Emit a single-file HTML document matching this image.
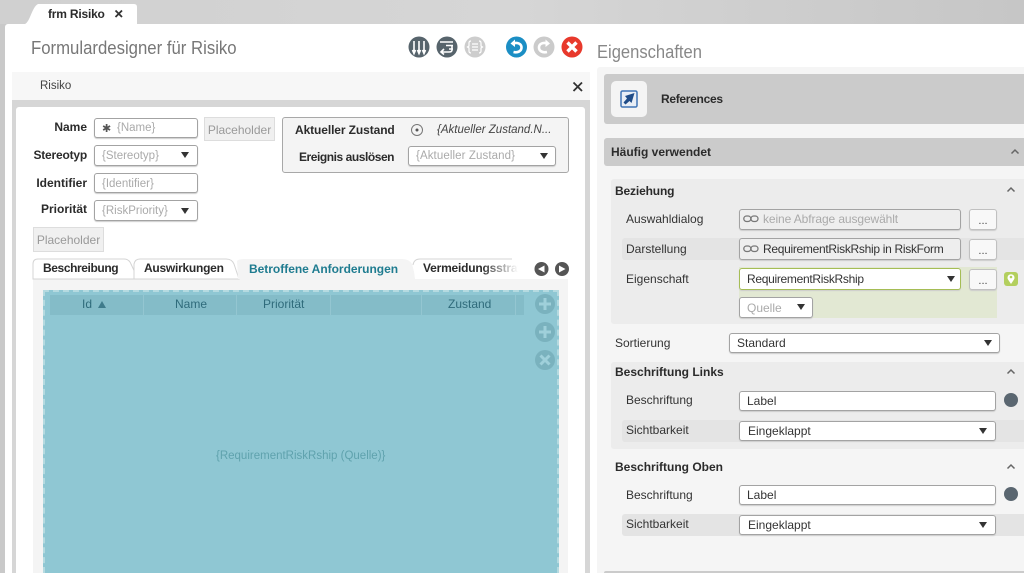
<!DOCTYPE html>
<html lang="de"><head><meta charset="utf-8"><title>Formulardesigner</title>
<style>
html,body{margin:0;padding:0;width:1024px;height:573px;overflow:hidden;background:#c9c9c9}
#r{position:absolute;left:0;top:0;width:1024px;height:573px;overflow:hidden;font-family:"Liberation Sans",sans-serif;font-size:12px;color:#333;filter:blur(.35px)}
#r div,#r svg{position:absolute}
.t{white-space:nowrap;line-height:16px;height:16px}
.b{font-weight:bold;color:#2b2b2b}
.f{box-sizing:border-box;background:#fff;border:1px solid #a3a3a3;border-radius:3px;box-shadow:0 1px 1px #ccc}
.g{color:#aaa}
.a{width:0;height:0;border-left:4px solid transparent;border-right:4px solid transparent;border-top:6px solid #333}
.dots{box-sizing:border-box;background:#f8f8f8;border:1px solid #c0c0c0;border-radius:3px;text-align:center;line-height:22px;font-size:11px;color:#444;box-shadow:0 1px 1px #ccc}
</style></head><body><div id="r">
<div style="left:0;top:0;width:1024px;height:24px;background:linear-gradient(90deg,#d0d0d0,#d6d6d6 50%,#c6c6c6)"></div>
<svg style="left:24px;top:4px" width="114" height="21"><path d="M1 20C6 18 8 3 14 0H110Q113 0 113 3V20Z" fill="#fff"/></svg>
<div class="t b" style="left:48px;top:6px;letter-spacing:-.2px">frm Risiko</div>
<svg style="left:114px;top:9px" width="10" height="10"><path d="M1.500 1.500 8 8M8 1.500 1.500 8" stroke="#333" stroke-width="1.800" fill="none"/></svg>
<div style="left:5px;top:24px;width:1019px;height:549px;background:#fff;border-radius:3px 0 0 0"></div>
<div class="t" style="left:31px;top:37px;height:22px;line-height:22px;font-size:18px;color:#777;transform:scaleX(.93);transform-origin:0 0">Formulardesigner für Risiko</div>

<svg style="left:408px;top:36px" width="175" height="22">
<circle cx="11" cy="11" r="10.500" fill="#57646c"/><path d="M6 5V17M11 5V17M16 5V17M4.500 14 6 17.500 7.500 14M9.500 14 11 17.500 12.500 14M14.500 14 16 17.500 17.500 14" stroke="#fff" stroke-width="1.600" fill="none"/>
<circle cx="39" cy="11" r="10.500" fill="#57646c"/><path d="M32 6H45M38 9.500H45M41 13H45M44 9.500V14Q44 16 41 16H33M36 13 33 16 36 18.500" stroke="#fff" stroke-width="1.600" fill="none"/>
<circle cx="67" cy="11" r="10.500" fill="#cdcdcd"/><path d="M63 5Q61 5 61 7V10L59.500 11 61 12V15Q61 17 63 17M71 5Q73 5 73 7V10L74.500 11 73 12V15Q73 17 71 17M64 8H70M64 11H70M64 14H70" stroke="#fff" stroke-width="1.200" fill="none"/>
<circle cx="108.500" cy="11" r="10.500" fill="#1b8ec4"/><path d="M105 7.500C110 6 113.500 8 113.500 11.500 113.500 15 110 17 105.500 16" stroke="#fff" stroke-width="2.600" fill="none"/><path d="M102.500 7.500 107 3.500V11Z" fill="#fff"/>
<circle cx="136" cy="11" r="10.500" fill="#cbcbcb"/><path d="M139.500 7.500C134.500 6 131 8 131 11.500 131 15 134.500 17 139 16" stroke="#fff" stroke-width="2.600" fill="none"/><path d="M142 7.500 137.500 3.500V11Z" fill="#fff"/>
<circle cx="164" cy="11" r="10.500" fill="#e8392c"/><path d="M159.500 6.500 168.500 15.500M168.500 6.500 159.500 15.500" stroke="#fff" stroke-width="3.400"/>
</svg>

<!-- form panel -->
<div style="left:12px;top:72px;width:578px;height:28px;background:#f7f7f7"></div>
<div class="t" style="left:40px;top:78px;color:#444;font-size:11.500px">Risiko</div>
<svg style="left:572px;top:81px" width="12" height="12"><path d="M1.500 1.500 10 10M10 1.500 1.500 10" stroke="#333" stroke-width="1.800"/></svg>
<div style="left:12px;top:100px;width:578px;height:473px;background:#d6d6d6"></div>
<div style="left:16px;top:107px;width:569px;height:466px;background:#fff;border-radius:3px 3px 0 0"></div>

<div class="t b" style="left:20px;width:67px;text-align:right;top:119px">Name</div>
<div class="f" style="left:94px;top:118px;width:104px;height:20px"></div>
<div class="t" style="left:102px;top:121px;font-size:11px;color:#555">✱</div>
<div class="t g" style="left:117px;top:120px;font-size:11.500px">{Name}</div>
<div class="t b" style="left:20px;width:67px;text-align:right;top:147px;letter-spacing:-.2px">Stereotyp</div>
<div class="f" style="left:94px;top:145px;width:104px;height:21px"></div>
<div class="t g" style="left:102px;top:148px;font-size:11.500px">{Stereotyp}</div>
<div class="a" style="left:181px;top:152px"></div>
<div class="t b" style="left:20px;width:67px;text-align:right;top:175px">Identifier</div>
<div class="f" style="left:94px;top:173px;width:104px;height:20px"></div>
<div class="t g" style="left:102px;top:176px;font-size:11.500px">{Identifier}</div>
<div class="t b" style="left:20px;width:67px;text-align:right;top:201px">Priorität</div>
<div class="f" style="left:94px;top:200px;width:104px;height:21px"></div>
<div class="t g" style="left:102px;top:203px;font-size:11.500px">{RiskPriority}</div>
<div class="a" style="left:181px;top:208px"></div>
<div style="left:204px;top:117px;width:71px;height:24px;box-sizing:border-box;background:#f0f0f0;border:1px solid #ddd;text-align:center;line-height:24px;color:#999;font-size:12px">Placeholder</div>
<div style="left:33px;top:227px;width:71px;height:25px;box-sizing:border-box;background:#f0f0f0;border:1px solid #ddd;text-align:center;line-height:25px;color:#999;font-size:12px">Placeholder</div>

<div style="left:282px;top:117px;width:287px;height:56px;box-sizing:border-box;background:#f4f4f4;border:1px solid #a8a8a8;border-radius:3px"></div>
<div class="t b" style="left:295px;top:122px;letter-spacing:-.1px">Aktueller Zustand</div>
<svg style="left:410px;top:123px" width="14" height="14"><circle cx="7" cy="7" r="5.500" fill="none" stroke="#777"/><circle cx="7" cy="7" r="1.500" fill="#555"/></svg>
<div class="t" style="left:437px;top:122px;font-style:italic;color:#444;font-size:11.500px">{Aktueller Zustand.N...</div>
<div class="t b" style="left:299px;top:149px;letter-spacing:-.45px">Ereignis auslösen</div>
<div class="f" style="left:408px;top:146px;width:148px;height:20px"></div>
<div class="t g" style="left:416px;top:148px;font-size:11.500px;letter-spacing:.1px">{Aktueller Zustand}</div>
<div class="a" style="left:540px;top:153px"></div>

<!-- tabs -->
<div style="left:33px;top:279px;width:535px;height:294px;background:#f4f4f4"></div>
<svg style="left:32px;top:258px" width="512" height="22">
<path d="M1 21V6Q1 1 6 1H92Q97 1 99 6L106 21Z" fill="#fff" stroke="#d4d4d4"/>
<path d="M102 21 102 6Q103 1 108 1H194Q200 1 202 6L207 21Z" fill="#fff" stroke="#d4d4d4"/>
<path d="M206 21 205 3Q207 1 212 1H370Q377 1 380 6L384 21Z" fill="#f4f4f4"/>
<path d="M383 21 381 6Q382 1 388 1H512V21Z" fill="#fff"/><path d="M381 7Q382 1 388 1H480" fill="none" stroke="#d4d4d4"/>
</svg>
<div class="t b" style="left:43px;top:260px;letter-spacing:-.4px">Beschreibung</div>
<div class="t b" style="left:144px;top:260px;letter-spacing:-.25px">Auswirkungen</div>
<div class="t b" style="left:249px;top:261px;color:#1f7c90;letter-spacing:-.02px">Betroffene Anforderungen</div>
<div class="t b" style="left:423px;top:260px;width:97px;overflow:hidden;letter-spacing:-.2px;-webkit-mask-image:linear-gradient(90deg,#000 60%,transparent 98%)">Vermeidungsstrategie</div>
<svg style="left:534px;top:262px" width="36" height="14"><circle cx="7.500" cy="7" r="7" fill="#555"/><path d="M10.500 3.500V10.500L4 7Z" fill="#fff"/><circle cx="28" cy="7" r="7" fill="#555"/><path d="M25 3.500V10.500L31.500 7Z" fill="#fff"/></svg>

<!-- teal -->
<div style="left:43px;top:290px;width:516px;height:283px;background:#8fc7d3"></div>
<div style="left:43px;top:290px;width:516px;height:283px;box-sizing:border-box;border:2px dashed #cfe8ea;border-bottom:0;opacity:.6"></div>
<div style="left:50px;top:295px;width:474px;height:20px;background:#84bcc8"></div>
<div style="left:143px;top:295px;width:1px;height:20px;background:#94c6d1"></div>
<div style="left:236px;top:295px;width:1px;height:20px;background:#94c6d1"></div>
<div style="left:330px;top:295px;width:1px;height:20px;background:#94c6d1"></div>
<div style="left:421px;top:295px;width:1px;height:20px;background:#94c6d1"></div>
<div style="left:515px;top:295px;width:1px;height:20px;background:#94c6d1"></div>
<div class="t" style="left:82px;top:296px;color:#2f6b7b">Id</div>
<svg style="left:97px;top:300px" width="10" height="9"><path d="M5 1 9 8H1Z" fill="#3f7b8b"/></svg>
<div class="t" style="left:175px;top:296px;color:#2f6b7b">Name</div>
<div class="t" style="left:263px;top:296px;color:#2f6b7b">Priorität</div>
<div class="t" style="left:448px;top:296px;color:#2f6b7b">Zustand</div>
<svg style="left:534px;top:293px" width="22" height="78">
<circle cx="11" cy="11" r="10" fill="#7ab2be"/><path d="M11 5V17M5 11H17" stroke="#9fd0da" stroke-width="3"/>
<circle cx="11" cy="39" r="10" fill="#7ab2be"/><path d="M11 33V45M5 39H17" stroke="#9fd0da" stroke-width="3"/>
<circle cx="11" cy="67" r="10" fill="#7ab2be"/><path d="M6.500 62.500 15.500 71.500M15.500 62.500 6.500 71.500" stroke="#9fd0da" stroke-width="3"/>
</svg>
<div class="t" style="left:216px;top:448px;color:#5fa2ad;font-size:11.500px">{RequirementRiskRship (Quelle)}</div>

<!-- properties -->
<div class="t" style="left:597px;top:40px;height:24px;line-height:24px;font-size:18px;color:#888;transform:scaleX(.92);transform-origin:0 0">Eigenschaften</div>
<div style="left:597px;top:67px;width:427px;height:506px;background:#f5f5f5;border-radius:3px 0 0 0"></div>
<div style="left:604px;top:74px;width:420px;height:50px;background:#cbcbcb;border-radius:3px 0 0 3px"></div>
<div style="left:611px;top:81px;width:36px;height:36px;background:#f4f4f4;border-radius:5px"></div>
<svg style="left:620px;top:90px" width="18" height="18"><rect x="1" y="1" width="16" height="16" rx="1.500" fill="#e8eef6" stroke="#3f74b5" stroke-width="1.500"/><path d="M14.500 3 5 6 7 8.500 3.500 12.500 5.500 14.500 9.500 11 11.500 13Z" fill="#1f4c88"/></svg>
<div class="t b" style="left:661px;top:91px;letter-spacing:-.3px">References</div>
<div style="left:604px;top:138px;width:420px;height:28px;background:#cbcbcb;border-radius:3px 0 0 3px"></div>
<div class="t b" style="left:611px;top:144px">Häufig verwendet</div>
<svg style="left:1010px;top:148px" width="10" height="7"><path d="M1.500 5.500 5 2 8.500 5.500" stroke="#666" stroke-width="1.500" fill="none"/></svg>

<div style="left:611px;top:179px;width:413px;height:145px;background:#ececec;border-radius:3px 0 0 3px"></div>
<div class="t b" style="left:615px;top:183px;letter-spacing:-.15px">Beziehung</div>
<svg style="left:1006px;top:186px" width="10" height="7"><path d="M1.500 5.500 5 2 8.500 5.500" stroke="#666" stroke-width="1.500" fill="none"/></svg>

<div class="t" style="left:626px;top:211px">Auswahldialog</div>
<div class="f" style="left:739px;top:209px;width:222px;height:21px;background:#eee"></div>
<svg style="left:743px;top:215px" width="16" height="8"><rect x=".8" y="1" width="7" height="5.500" rx="2.700" fill="none" stroke="#777" stroke-width="1.300"/><rect x="8" y="1" width="7" height="5.500" rx="2.700" fill="none" stroke="#777" stroke-width="1.300"/></svg>
<div class="t g" style="left:763px;top:211px;letter-spacing:-.1px">keine Abfrage ausgewählt</div>
<div class="dots" style="left:969px;top:209px;width:28px;height:21px">...</div>

<div style="left:622px;top:238px;width:402px;height:22px;background:#e4e4e4;border-radius:3px 0 0 3px"></div>
<div class="t" style="left:626px;top:241px">Darstellung</div>
<div class="f" style="left:739px;top:238px;width:222px;height:22px;background:#eee"></div>
<svg style="left:743px;top:245px" width="16" height="8"><rect x=".8" y="1" width="7" height="5.500" rx="2.700" fill="none" stroke="#777" stroke-width="1.300"/><rect x="8" y="1" width="7" height="5.500" rx="2.700" fill="none" stroke="#777" stroke-width="1.300"/></svg>
<div class="t" style="left:763px;top:241px;letter-spacing:-.3px">RequirementRiskRship in RiskForm</div>
<div class="dots" style="left:969px;top:239px;width:28px;height:21px">...</div>

<div style="left:739px;top:267px;width:258px;height:51px;background:#e2e8d3"></div>
<div class="t" style="left:626px;top:271px">Eigenschaft</div>
<div class="f" style="left:739px;top:268px;width:222px;height:22px;border-color:#a5bd55"></div>
<div class="t" style="left:747px;top:271px;letter-spacing:-.3px">RequirementRiskRship</div>
<div class="a" style="left:947px;top:276px"></div>
<div class="dots" style="left:969px;top:269px;width:28px;height:21px">...</div>
<div style="left:1004px;top:272px;width:14px;height:14px;background:#b3cf5e;border-radius:3px"></div>
<svg style="left:1006px;top:273px" width="10" height="12"><path d="M5 11 2 6.500A3.500 3.500 0 1 1 8 6.500Z" fill="#fff"/><circle cx="5" cy="4" r="1.300" fill="#b3cf5e"/></svg>
<div class="f" style="left:739px;top:297px;width:74px;height:21px"></div>
<div class="t g" style="left:747px;top:300px">Quelle</div>
<div class="a" style="left:797px;top:304px"></div>

<div class="t" style="left:615px;top:335px">Sortierung</div>
<div class="f" style="left:729px;top:333px;width:271px;height:20px"></div>
<div class="t" style="left:737px;top:335px">Standard</div>
<div class="a" style="left:984px;top:340px"></div>

<div style="left:611px;top:362px;width:413px;height:87px;background:#ececec;border-radius:3px 0 0 3px"></div>
<div class="t b" style="left:615px;top:364px">Beschriftung Links</div>
<svg style="left:1006px;top:368px" width="10" height="7"><path d="M1.500 5.500 5 2 8.500 5.500" stroke="#666" stroke-width="1.500" fill="none"/></svg>
<div class="t" style="left:626px;top:392px">Beschriftung</div>
<div class="f" style="left:739px;top:391px;width:257px;height:20px"></div>
<div class="t" style="left:747px;top:393px">Label</div>
<div style="left:1004px;top:393px;width:14px;height:14px;border-radius:50%;background:#5a6670"></div>
<div style="left:622px;top:420px;width:402px;height:22px;background:#e4e4e4;border-radius:3px 0 0 3px"></div>
<div class="t" style="left:626px;top:422px">Sichtbarkeit</div>
<div class="f" style="left:739px;top:421px;width:257px;height:20px"></div>
<div class="t" style="left:748px;top:423px">Eingeklappt</div>
<div class="a" style="left:979px;top:428px"></div>

<div class="t b" style="left:615px;top:459px">Beschriftung Oben</div>
<svg style="left:1006px;top:463px" width="10" height="7"><path d="M1.500 5.500 5 2 8.500 5.500" stroke="#666" stroke-width="1.500" fill="none"/></svg>
<div class="t" style="left:626px;top:487px">Beschriftung</div>
<div class="f" style="left:739px;top:485px;width:257px;height:20px"></div>
<div class="t" style="left:747px;top:487px">Label</div>
<div style="left:1004px;top:487px;width:14px;height:14px;border-radius:50%;background:#5a6670"></div>
<div style="left:622px;top:514px;width:402px;height:22px;background:#e4e4e4;border-radius:3px 0 0 3px"></div>
<div class="t" style="left:626px;top:516px">Sichtbarkeit</div>
<div class="f" style="left:739px;top:515px;width:257px;height:20px"></div>
<div class="t" style="left:748px;top:517px">Eingeklappt</div>
<div class="a" style="left:979px;top:522px"></div>
<div style="left:604px;top:571px;width:420px;height:2px;background:#cbcbcb;border-radius:3px 0 0 0"></div>
</div></body></html>
